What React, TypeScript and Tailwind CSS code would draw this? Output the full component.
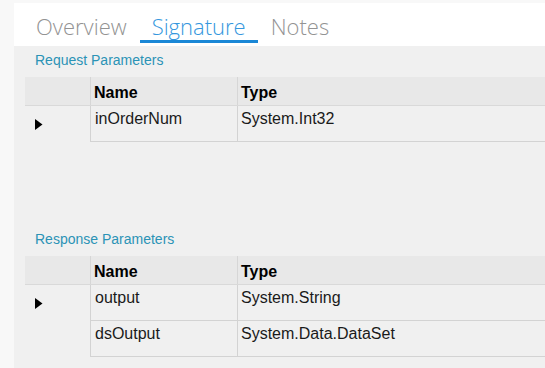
const tabs = [
  { label: "Overview", active: false },
  { label: "Signature", active: true },
  { label: "Notes", active: false },
];

type Param = { name: string; type: string };

const requestParams: Param[] = [{ name: "inOrderNum", type: "System.Int32" }];

const responseParams: Param[] = [
  { name: "output", type: "System.String" },
  { name: "dsOutput", type: "System.Data.DataSet" },
];

const SectionLabel = ({ text }: { text: string }) => (
  <div className="h-[31px] pl-[10px] pt-[6px] text-[14px] leading-[16px] text-[#2b93b6]">
    {text}
  </div>
);

const ParamGrid = ({ rows }: { rows: Param[] }) => {
  return (
    <div className="text-[16px] text-[#1a1a1a]">
      <div className="flex h-[29px] bg-[#e8e8e8] border-b border-[#d9d9d9]">
        <div className="w-[65px]" />
        <div className="w-[147px] border-l border-[#d6d6d6] pl-[3px] pt-[7px] leading-[18px] font-bold text-black">
          Name
        </div>
        <div className="flex-1 border-l border-[#d6d6d6] pl-[3px] pt-[7px] leading-[18px] font-bold text-black">
          Type
        </div>
      </div>
      {rows.map((row, i) => (
        <div key={row.name} className="flex h-[36px]">
          <div className="w-[65px] flex items-center pl-[10px]">
            {i === 0 && (
              <svg width="8" height="11" viewBox="0 0 8 11">
                <path d="M0 0 L7.5 5.5 L0 11 Z" fill="#000" />
              </svg>
            )}
          </div>
          <div className="w-[147px] border-l border-b border-[#d3d3d3] pl-[4px] pt-[4px] leading-[18px]">
            {row.name}
          </div>
          <div className="flex-1 border-l border-b border-[#d3d3d3] pl-[3px] pt-[4px] leading-[18px]">
            {row.type}
          </div>
        </div>
      ))}
    </div>
  );
};

export default function App() {
  return (
    <div
      className="w-[545px] h-[368px] overflow-hidden bg-[#f8f8f8] pl-[14px] pt-[3px] flex flex-col"
      style={{ fontFamily: '"Liberation Sans", Arial, sans-serif' }}
    >
      <div className="h-[43px] bg-white flex items-end pl-[10px] pb-[3px] gap-[1px]">
        {tabs.map((tab) => (
          <div
            key={tab.label}
            className={
              tab.active
                ? "px-3 border-b-[3px] border-[#1a87d6] text-[#3597de]"
                : "px-3 border-b-[3px] border-transparent text-[#939393]"
            }
          >
            <div
              className="text-[22px] leading-[27px] font-light"
              style={{ fontFamily: '"Open Sans", sans-serif' }}
            >
              {tab.label}
            </div>
          </div>
        ))}
      </div>
      <div className="flex-1 bg-[#f0f0f0] pl-[11px]">
        <SectionLabel text="Request Parameters" />
        <ParamGrid rows={requestParams} />
        <div className="h-[83px]" />
        <SectionLabel text="Response Parameters" />
        <ParamGrid rows={responseParams} />
      </div>
    </div>
  );
}
